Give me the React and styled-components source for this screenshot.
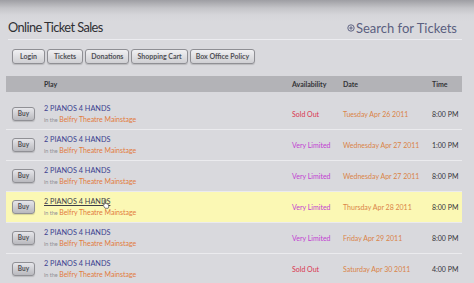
import styled, { createGlobalStyle } from "styled-components"

const GlobalStyle = createGlobalStyle`
  html, body {
    margin: 0;
    padding: 0;
    background: #d9d9dd;
    font-family: Lato, "Open Sans", "DejaVu Sans", sans-serif;
  }
`

const Page = styled.div`
  width: 474px;
  height: 283px;
  overflow: hidden;
  position: relative;
  background: linear-gradient(#9e9ea3 0, #c4c4c8 8px, #d6d6da 15px, #d9d9dd 22px);
`

const Header = styled.div`
  display: flex;
  justify-content: space-between;
  align-items: baseline;
  padding: 18px 17px 0 8px;
  height: 21px;
`

const Title = styled.h1`
  margin: 0;
  font-size: 12.8px;
  font-weight: 400;
  letter-spacing: -0.6px;
  color: #2f2f33;
  line-height: 18px;
`

const SearchLink = styled.a`
  display: flex;
  align-items: center;
  gap: 1px;
  font-size: 13px;
  color: #5b5f80;
  line-height: 18px;
  text-decoration: none;
`

const Rule = styled.div`
  margin: 0 12px 0 8px;
  border-top: 1px solid #ececf0;
`

const Nav = styled.div`
  display: flex;
  gap: 2px;
  padding: 9px 0 0 12px;
`

const NavButton = styled.button`
  height: 15px;
  padding: 0 ${({ pad }) => pad || 5}px;
  border: 1px solid #8f8f94;
  border-radius: 3px;
  background: linear-gradient(#f0f0f2, #cfcfd3);
  box-shadow: 0 1px 1px rgba(0, 0, 0, 0.15);
  font-family: inherit;
  font-size: 7px;
  font-weight: 700;
  color: #505055;
  line-height: 13px;
`

const Table = styled.div`
  margin: 12px 12px 0 6px;
`

const cols = "38px 248px 51px 89px 1fr"

const HeadRow = styled.div`
  display: grid;
  grid-template-columns: ${cols};
  align-items: center;
  height: 16px;
  background: #b3b3b7;
  font-size: 7px;
  font-weight: 700;
  color: #333338;
`

const Body = styled.div`
  padding-top: 7px;
`

const Row = styled.div`
  display: grid;
  grid-template-columns: ${cols};
  align-items: center;
  height: 30px;
  border-top: ${({ first }) => (first ? "none" : "1px solid #ebebee")};
  background: ${({ hot }) => (hot ? "#fbf8b4" : "transparent")};
  position: relative;
`

const BuyButton = styled.button`
  margin-left: 6px;
  width: 23px;
  height: 14px;
  padding: 0;
  border: 1px solid #909095;
  border-radius: 3px;
  background: linear-gradient(#e6e6ea, #b9b9be);
  box-shadow: 0 1px 1px rgba(0, 0, 0, 0.15);
  font-family: inherit;
  font-size: 6.5px;
  font-weight: 700;
  color: #505055;
  line-height: 12px;
`

const PlayCell = styled.div`
  display: flex;
  flex-direction: column;
  gap: 2px;
`

const PlayTitle = styled.span`
  font-size: 7.3px;
  line-height: 9px;
  color: ${({ hot }) => (hot ? "#3d3d4a" : "#3b3f8f")};
  text-decoration: ${({ hot }) => (hot ? "underline" : "none")};
`

const Venue = styled.span`
  font-size: 5.5px;
  line-height: 9px;
  color: #8e8e94;
`

const VenueName = styled.span`
  font-size: 7px;
  color: #e27a3c;
`

const Avail = styled.span`
  font-size: 7px;
  color: ${({ sold }) => (sold ? "#d9354f" : "#c23fd2")};
`

const DateText = styled.span`
  font-size: 7px;
  color: #da8448;
`

const TimeText = styled.span`
  font-size: 7px;
  color: #343438;
`

const Cursor = styled.svg`
  position: absolute;
  left: 96px;
  top: 7px;
`

const rows = [
  { avail: "Sold Out", date: "Tuesday Apr 26 2011", time: "8:00 PM" },
  { avail: "Very Limited", date: "Wednesday Apr 27 2011", time: "1:00 PM" },
  { avail: "Very Limited", date: "Wednesday Apr 27 2011", time: "8:00 PM" },
  { avail: "Very Limited", date: "Thursday Apr 28 2011", time: "8:00 PM", hot: true },
  { avail: "Very Limited", date: "Friday Apr 29 2011", time: "8:00 PM" },
  { avail: "Sold Out", date: "Saturday Apr 30 2011", time: "4:00 PM" },
]

const App = () => (
  <Page>
    <GlobalStyle />
    <Header>
      <Title>Online Ticket Sales</Title>
      <SearchLink>
        <svg width="8" height="8" viewBox="0 0 10 10">
          <circle cx="5" cy="5" r="4" fill="none" stroke="#5b5f80" strokeWidth="1.2" />
          <path d="M5 2.8v4.4M2.8 5h4.4" stroke="#5b5f80" strokeWidth="1.2" />
        </svg>
        Search for Tickets
      </SearchLink>
    </Header>
    <Rule />
    <Nav>
      <NavButton pad={7}>Login</NavButton>
      <NavButton pad={6}>Tickets</NavButton>
      <NavButton>Donations</NavButton>
      <NavButton>Shopping Cart</NavButton>
      <NavButton>Box Office Policy</NavButton>
    </Nav>
    <Table>
      <HeadRow>
        <span />
        <span>Play</span>
        <span>Availability</span>
        <span>Date</span>
        <span>Time</span>
      </HeadRow>
      <Body>
        {rows.map((r, i) => (
          <Row key={i} first={i === 0} hot={r.hot}>
            <BuyButton>Buy</BuyButton>
            <PlayCell>
              <PlayTitle hot={r.hot}>2 PIANOS 4 HANDS</PlayTitle>
              <Venue>
                in the <VenueName>Belfry Theatre Mainstage</VenueName>
              </Venue>
            </PlayCell>
            <Avail sold={r.avail === "Sold Out"}>{r.avail}</Avail>
            <DateText>{r.date}</DateText>
            <TimeText>{r.time}</TimeText>
            {r.hot && (
              <Cursor width="8" height="10" viewBox="0 0 16 20">
                <path
                  d="M5 1.5c.8 0 1.5.7 1.5 1.5v6l1-.3c.8-.2 1.6.3 1.8 1l.2-.1c.8-.2 1.6.3 1.8 1 .8-.2 1.6.3 1.8 1.1l.4 2.3c.3 1.8-.2 3.2-1.2 4.5H6.3L2.5 13c-.6-.8-.4-1.7.4-2.1.6-.3 1.2-.1 1.6.4V3c0-.8.7-1.5.5-1.5z"
                  fill="#fff"
                  stroke="#222"
                  strokeWidth="1.2"
                  strokeLinejoin="round"
                />
              </Cursor>
            )}
          </Row>
        ))}
      </Body>
    </Table>
  </Page>
)

export default App
